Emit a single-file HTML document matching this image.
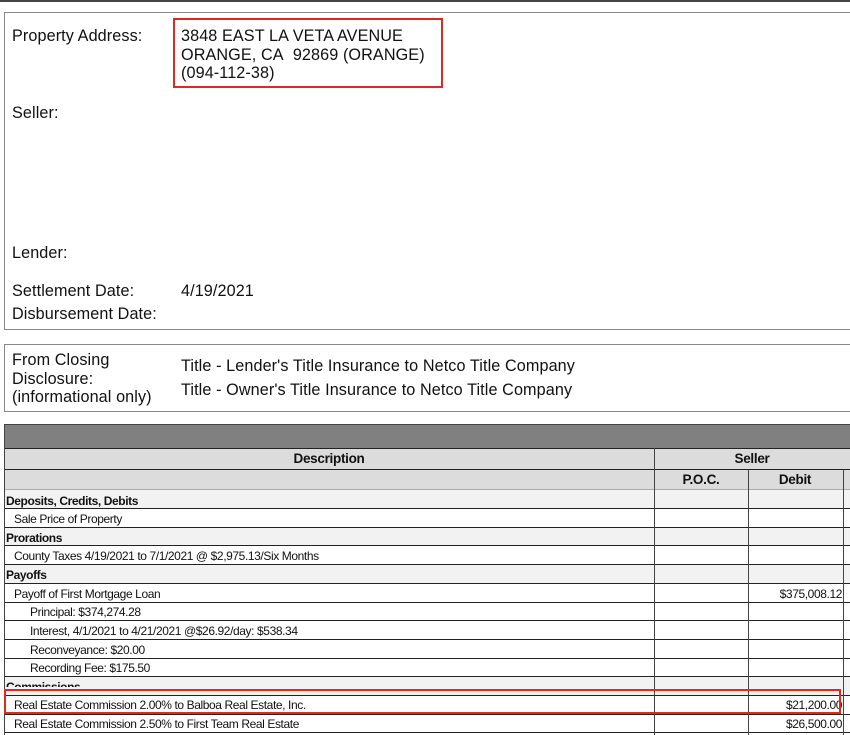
<!DOCTYPE html>
<html><head><meta charset="utf-8"><style>
body{margin:0;width:850px;height:735px;overflow:hidden;background:#fff;font-family:"Liberation Sans",Arial,sans-serif;position:relative}
.a{position:absolute}
.l{font-size:16.2px;letter-spacing:0.1px;color:#111;position:absolute;white-space:nowrap}
.t{position:absolute;left:4px;width:846px;font-size:12px;letter-spacing:-0.4px;color:#111;white-space:nowrap}
.h{font-size:13.5px;letter-spacing:-0.3px}
.r{position:absolute;left:4px;width:846px;border-bottom:1.5px solid #222;box-sizing:border-box}
.v{position:absolute;width:1px;background:#444}
</style></head><body>
<div class="a" style="left:0;top:0;width:850px;height:2px;background:#444"></div>
<div class="a" style="left:4px;top:12px;width:850px;height:318px;border:1px solid #888;border-right:none;box-sizing:border-box"></div>
<div class="a" style="left:173px;top:18px;width:270px;height:70px;border:2px solid #e02a1f;box-sizing:border-box"></div>
<div class="l" style="left:12px;top:27px">Property Address:</div>
<div class="l" style="left:181px;top:27px;line-height:18.5px">3848 EAST LA VETA AVENUE<br>ORANGE, CA&nbsp; 92869 (ORANGE)<br>(094-112-38)</div>
<div class="l" style="left:12px;top:104px">Seller:</div>
<div class="l" style="left:12px;top:244px">Lender:</div>
<div class="l" style="left:12px;top:282px">Settlement Date:</div>
<div class="l" style="left:181px;top:282px">4/19/2021</div>
<div class="l" style="left:12px;top:305px">Disbursement Date:</div>
<div class="a" style="left:4px;top:344px;width:850px;height:68px;border:1px solid #888;border-right:none;box-sizing:border-box"></div>
<div class="l" style="left:12px;top:351px;line-height:18.5px">From Closing<br>Disclosure:<br>(informational only)</div>
<div class="l" style="left:181px;top:357px">Title - Lender's Title Insurance to Netco Title Company</div>
<div class="l" style="left:181px;top:381px">Title - Owner's Title Insurance to Netco Title Company</div>

<div class="a" style="left:4px;top:424px;width:846px;height:24px;background:#808080;border-top:1px solid #444"></div>
<div class="a" style="left:4px;top:448px;width:846px;height:22px;background:#dcdcdc;border-top:1.5px solid #222;border-bottom:1.5px solid #222;box-sizing:border-box"></div>
<div class="a" style="left:4px;top:470px;width:846px;height:20px;background:#dcdcdc;border-bottom:1px solid #aaa;box-sizing:border-box"></div>
<div class="t h" style="top:451px;left:4px;width:650px;text-align:center;font-weight:bold">Description</div>
<div class="t h" style="top:451px;left:654px;width:196px;text-align:center;font-weight:bold">Seller</div>
<div class="t h" style="top:472px;left:654px;width:94px;text-align:center;font-weight:bold">P.O.C.</div>
<div class="t h" style="top:472px;left:748px;width:94px;text-align:center;font-weight:bold">Debit</div>
<div class="a" style="left:4px;top:490px;width:846px;height:19px;background:#f2f2f2"></div>
<div class="a" style="left:4px;top:528px;width:846px;height:18px;background:#f2f2f2"></div>
<div class="a" style="left:4px;top:565px;width:846px;height:19px;background:#f2f2f2"></div>
<div class="a" style="left:4px;top:677px;width:846px;height:19px;background:#f2f2f2"></div>
<div class="r" style="top:490px;height:19px"></div>
<div class="r" style="top:509px;height:19px"></div>
<div class="r" style="top:528px;height:18px"></div>
<div class="r" style="top:546px;height:19px"></div>
<div class="r" style="top:565px;height:19px"></div>
<div class="r" style="top:584px;height:18.5px"></div>
<div class="r" style="top:602px;height:19px"></div>
<div class="r" style="top:621px;height:19px"></div>
<div class="r" style="top:640px;height:18.5px"></div>
<div class="r" style="top:658px;height:19px"></div>
<div class="r" style="top:677px;height:19px"></div>
<div class="r" style="top:696px;height:18.5px"></div>
<div class="r" style="top:714px;height:19px"></div>
<div class="v" style="left:4px;top:424px;height:311px"></div>
<div class="v" style="left:654px;top:448px;height:287px"></div>
<div class="v" style="left:748px;top:470px;height:265px"></div>
<div class="v" style="left:843px;top:470px;height:265px"></div>
<div class="t" style="top:494px;left:6px;font-weight:bold">Deposits, Credits, Debits</div>
<div class="t" style="top:512px;left:14px">Sale Price of Property</div>
<div class="t" style="top:531px;left:6px;font-weight:bold">Prorations</div>
<div class="t" style="top:549px;left:14px">County Taxes 4/19/2021 to 7/1/2021 @ $2,975.13/Six Months</div>
<div class="t" style="top:568px;left:6px;font-weight:bold">Payoffs</div>
<div class="t" style="top:587px;left:14px">Payoff of First Mortgage Loan</div>
<div class="t" style="top:587px;left:748px;width:94px;text-align:right">$375,008.12</div>
<div class="t" style="top:605px;left:30px">Principal: $374,274.28</div>
<div class="t" style="top:624px;left:30px">Interest, 4/1/2021 to 4/21/2021 @$26.92/day: $538.34</div>
<div class="t" style="top:643px;left:30px">Reconveyance: $20.00</div>
<div class="t" style="top:661px;left:30px">Recording Fee: $175.50</div>
<div class="a" style="left:4px;top:677px;width:650px;height:10px;overflow:hidden"><div class="t" style="top:3px;left:2px;font-weight:bold">Commissions</div></div>
<div class="t" style="top:698px;left:14px">Real Estate Commission 2.00% to Balboa Real Estate, Inc.</div>
<div class="t" style="top:698px;left:748px;width:94px;text-align:right">$21,200.00</div>
<div class="t" style="top:717px;left:14px">Real Estate Commission 2.50% to First Team Real Estate</div>
<div class="t" style="top:717px;left:748px;width:94px;text-align:right">$26,500.00</div>
<div class="a" style="left:4px;top:689px;width:837px;height:25px;border:2px solid #e02a1f;box-sizing:border-box"></div>
</body></html>
